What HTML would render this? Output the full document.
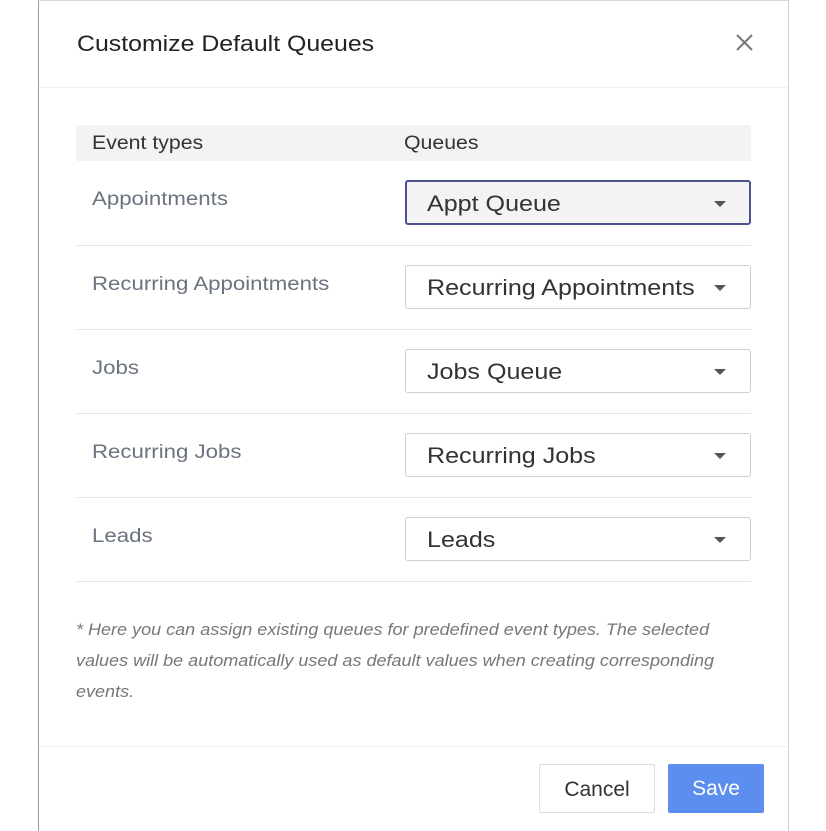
<!DOCTYPE html>
<html><head><style>
body{margin:0;width:826px;height:826px;background:#fff;font-family:"Liberation Sans",sans-serif;position:relative;overflow:hidden}
.dlg{position:absolute;left:38px;top:0;width:749px;height:830px;border-left:1px solid #9a9a9a;border-right:1px solid #cfcfcf;border-top:1px solid #d8d8d8}
.s{transform-origin:left center;display:inline-block;white-space:nowrap}
.t{position:absolute;left:77px;top:31px;font-size:22px;color:#222;transform:scaleX(1.13)}
.x{position:absolute;left:735px;top:33px}
.hr{position:absolute;left:39px;width:748px;height:1px;background:#eee}
.th{position:absolute;left:76px;top:125px;width:675px;height:36px;background:#f3f3f3;font-size:19px;color:#333}
.th span{position:absolute;top:8px;transform:scaleX(1.12)}
.lab{position:absolute;left:92px;font-size:19px;color:#6b7380;transform:scaleX(1.17)}
.sep{position:absolute;left:76px;width:675px;height:1px;background:#e6e6e6}
.sel{position:absolute;left:405px;width:346px;height:44px;border:1px solid #cfcfcf;border-radius:3px;background:#fff;font-size:22px;color:#333;box-sizing:border-box}
.sel span{position:absolute;left:21px;top:9px;transform:scaleX(1.14)}
.sel i{position:absolute;right:24px;top:19px;width:0;height:0;border-left:6px solid transparent;border-right:6px solid transparent;border-top:6px solid #555}
.note{position:absolute;left:76px;top:614px;width:615px;font-size:17px;font-style:italic;color:#777;line-height:31px;transform:scaleX(1.06);transform-origin:left top}
.btn{position:absolute;top:764px;height:49px;border-radius:2px;font-size:21px;text-align:center;line-height:49px;box-sizing:border-box}
</style></head><body>
<div class="dlg"></div>
<div class="t s">Customize Default Queues</div>
<svg class="x" width="19" height="19" viewBox="0 0 19 19"><path d="M2 2L17 17M17 2L2 17" stroke="#777" stroke-width="2"/></svg>
<div class="hr" style="top:87px"></div>
<div class="th"><span class="s" style="left:16px">Event types</span><span class="s" style="left:328px">Queues</span></div>
<div class="lab s" style="top:189px">Appointments</div>
<div class="sel" style="top:180px;border:2px solid #4a5390;background:#f3f3f3;height:45px"><span class="s" style="left:20px;top:9px">Appt Queue</span><i style="right:23px"></i></div>
<div class="sep" style="top:245px"></div>
<div class="lab s" style="top:274px">Recurring Appointments</div>
<div class="sel" style="top:265px"><span class="s">Recurring Appointments</span><i></i></div>
<div class="sep" style="top:329px"></div>
<div class="lab s" style="top:358px">Jobs</div>
<div class="sel" style="top:349px"><span class="s">Jobs Queue</span><i></i></div>
<div class="sep" style="top:413px"></div>
<div class="lab s" style="top:442px">Recurring Jobs</div>
<div class="sel" style="top:433px"><span class="s">Recurring Jobs</span><i></i></div>
<div class="sep" style="top:497px"></div>
<div class="lab s" style="top:526px">Leads</div>
<div class="sel" style="top:517px"><span class="s">Leads</span><i></i></div>
<div class="sep" style="top:581px"></div>
<div class="note">* Here you can assign existing queues for predefined event types. The selected values will be automatically used as default values when creating corresponding events.</div>
<div class="hr" style="top:746px"></div>
<div class="btn" style="left:539px;width:116px;border:1px solid #ddd;color:#333;background:#fff">Cancel</div>
<div class="btn" style="left:668px;width:96px;background:#5b8eee;color:#fff">Save</div>
</body></html>
